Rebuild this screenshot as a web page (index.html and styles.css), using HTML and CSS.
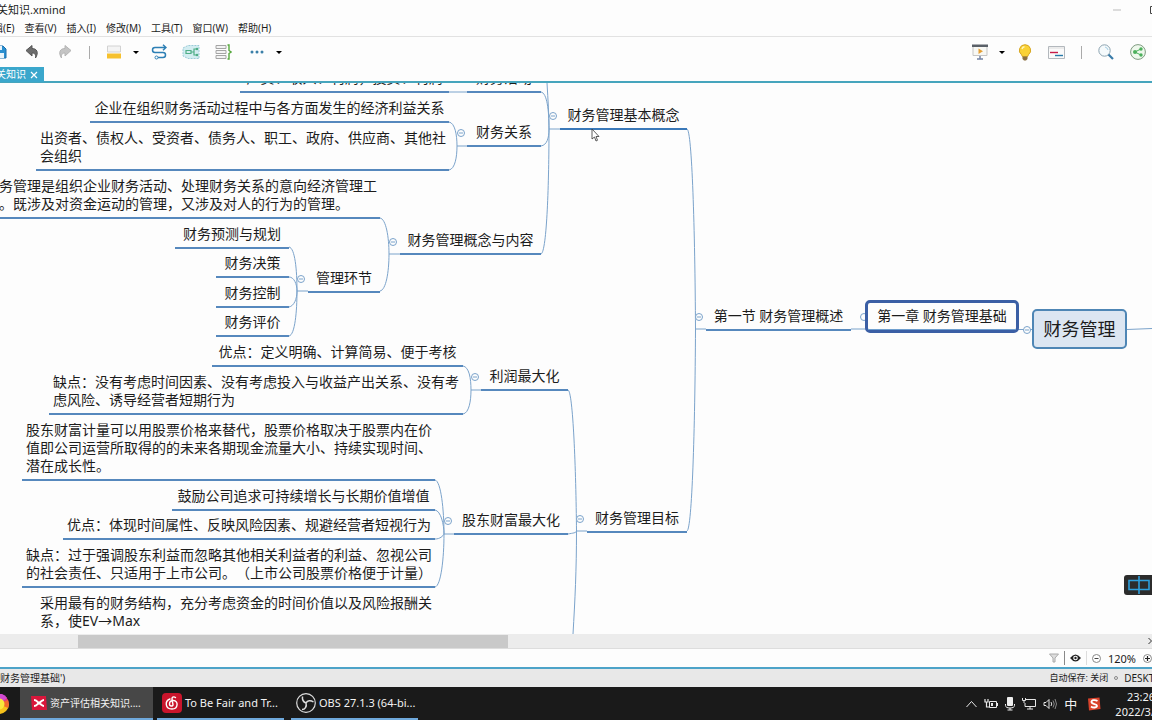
FILE: index.html
```html
<!DOCTYPE html>
<html lang="zh-CN">
<head>
<meta charset="utf-8">
<title>资产评估相关知识.xmind</title>
<link rel="stylesheet" href="styles.css">
</head>
<body>
<div class="app">
  <header class="titlebar">
    <span class="doc-title">相关知识.xmind</span>
    <span class="win-controls">
      <button class="win-btn" aria-label="最小化"><svg width="8" height="8" viewBox="0 0 8 8"><path d="M0 4h8" stroke="#bbb" fill="none"/></svg></button>
      <button class="win-btn" aria-label="最大化"><svg width="8" height="8" viewBox="0 0 8 8"><path d="M.5 .5h7v7h-7z" stroke="#444" fill="none"/></svg></button>
    </span>
  </header>
  <nav class="menubar">
    <button class="menu">编辑(E)</button>
    <button class="menu">查看(V)</button>
    <button class="menu">插入(I)</button>
    <button class="menu">修改(M)</button>
    <button class="menu">工具(T)</button>
    <button class="menu">窗口(W)</button>
    <button class="menu">帮助(H)</button>
  </nav>
  <div class="toolbar">
    <div class="tools">
      <button class="tool tool-save" aria-label="保存"><svg width="16" height="16" viewBox="0 0 16 16"><path d="M1 2h11l3 3v9H1z" fill="#2a8fd0" stroke="#1b6fae"/><path d="M4 2h7v4H4zM3 9h10v5H3z" fill="#e8f4fb"/></svg></button>
      <button class="tool tool-undo" aria-label="撤销"><svg width="16" height="16" viewBox="0 0 16 16"><path d="M2 6.500 8 1.500v3c5 0 7 4 3.500 9.500 .5-4-1-5-3.500-5v3z" fill="#6d6d6d" stroke="#555"/></svg></button>
      <button class="tool tool-redo" aria-label="重做"><svg width="16" height="16" viewBox="0 0 16 16"><path d="M14 6.500 8 1.500v3c-5 0-7 4-3.500 9.500-.5-4 1-5 3.500-5v3z" fill="#c4c4c4" stroke="#b4b4b4"/></svg></button>
      <span class="divider"></span>
      <button class="tool tool-topic" aria-label="主题"><svg width="16" height="16" viewBox="0 0 16 16"><path d="M1.500 2h13v6h-13z" fill="#f4f4f4" stroke="#d2d2d2"/><path d="M1 9.500h14v5H1z" fill="#f6c12e"/></svg></button>
      <button class="tool caret" aria-label="更多主题"><svg width="8" height="5" viewBox="0 0 8 5"><path d="M1 1h6L4 4z"/></svg></button>
      <button class="tool tool-rel" aria-label="联系"><svg width="16" height="16" viewBox="0 0 16 16"><path d="M15 3.500H4a2.500 2.500 0 0 0 0 5h8a2.500 2.500 0 0 1 0 5H7M12 .8l3 2.700-3 2.700" fill="none" stroke="#2d7fb5" stroke-width="1.500"/><circle cx="5.500" cy="13.500" r="1.500" fill="#fff" stroke="#2d7fb5"/></svg></button>
      <button class="tool tool-bound" aria-label="外框"><svg width="18" height="16" viewBox="0 0 18 16"><path d="M1 4 6 1.500h11v13H6L1 12z" fill="#d3edf1" stroke="#9bcbd8" stroke-dasharray="2 1"/><path d="M9 8h3M12 8V5h3M12 8v3h3M4 6.500h5v3H4z" fill="none" stroke="#4fae86" stroke-width="1.200"/><circle cx="15" cy="5" r="1.300" fill="#4fae86"/><circle cx="15" cy="11" r="1.300" fill="#4fae86"/></svg></button>
      <button class="tool tool-sum" aria-label="概要"><svg width="17" height="16" viewBox="0 0 17 16"><path d="M1 1.500h10v3H1zM1 6.500h10v3H1zM1 11.500h10v3H1z" fill="#f3f3f3" stroke="#a5a5a5"/><path d="M12.500 1H14v5.500l2 1.500-2 1.500V15h-1.500" fill="none" stroke="#55a83c" stroke-width="1.400"/></svg></button>
      <button class="tool tool-more" aria-label="更多"><svg width="14" height="4" viewBox="0 0 14 4"><g fill="#3a7fa8"><circle cx="2" cy="2" r="1.500"/><circle cx="7" cy="2" r="1.500"/><circle cx="12" cy="2" r="1.500"/></g></svg></button>
      <button class="tool caret" aria-label="更多选项"><svg width="8" height="5" viewBox="0 0 8 5"><path d="M1 1h6L4 4z"/></svg></button>
    </div>
    <div class="tools tools-right">
      <button class="tool" aria-label="演示"><svg width="16" height="16" viewBox="0 0 16 16"><path d="M1 2.500h14v9H1z" fill="#f8f8f4" stroke="#c5c5c5"/><path d="M0 .5h16v2.500H0z" fill="#5a6068"/><path d="M6.500 4.500v5.500L11 7.200z" fill="#e5a034"/><path d="M8 12v3M5 15h6" stroke="#7382a4" stroke-width="1.500"/></svg></button>
      <button class="tool caret" aria-label="演示选项"><svg width="8" height="5" viewBox="0 0 8 5"><path d="M1 1h6L4 4z"/></svg></button>
      <button class="tool tool-idea" aria-label="头脑风暴"><svg width="14" height="17" viewBox="0 0 14 17"><path d="M7 .7a5.600 5.600 0 0 0-3.500 10l1 2h5l1-2A5.600 5.600 0 0 0 7 .7z" fill="#fad235" stroke="#d6a520"/><path d="M4.500 12.500h5v2.500L8 16.500H6L4.500 15z" fill="#8c7140"/><path d="M4 5a3 3 0 0 1 2.500-2.200" stroke="#fff6bb" fill="none" stroke-width="1.400"/></svg></button>
      <button class="tool tool-gantt" aria-label="甘特图"><svg width="17" height="15" viewBox="0 0 17 15"><path d="M.5 1.500h16v12H.5z" fill="#fafafa" stroke="#b3b8bd"/><path d="M1 3h15" stroke="#dcdcdc"/><path d="M2 7.500h8" stroke="#c71b48" stroke-width="1.400"/><path d="M7 10.500h8" stroke="#2779a8" stroke-width="1.400"/></svg></button>
      <span class="divider"></span>
      <button class="tool tool-find" aria-label="搜索"><svg width="16" height="16" viewBox="0 0 16 16"><circle cx="6.500" cy="6.500" r="5.700" fill="#f5fafc" stroke="#8ba3b0"/><path d="M7 3a4 4 0 0 1 3 3" stroke="#a6cfe4" fill="none"/><path d="m10.500 10.500 4.500 4.500" stroke="#3a7ba8" stroke-width="2.200"/></svg></button>
      <button class="tool tool-share" aria-label="分享"><svg width="16" height="16" viewBox="0 0 16 16"><circle cx="8" cy="8" r="7.400" fill="#eef8ec" stroke="#7f9b80"/><path d="M10.800 5 5 8l5.800 3" fill="none" stroke="#4cb05c"/><g fill="#4cb05c"><circle cx="11" cy="5" r="1.700"/><circle cx="5" cy="8" r="2"/><circle cx="11" cy="11" r="1.700"/></g></svg></button>
    </div>
  </div>
  <div class="tabs">
    <button class="tab">资产评估相关知识</button><button class="tab-close" aria-label="关闭标签"><svg width="8" height="8" viewBox="0 0 8 8"><path d="m1 1 6 6M7 1 1 7" stroke="#fff" stroke-width="1.200"/></svg></button>
  </div>

  <main class="canvas">
    <svg class="links" width="1152" height="551" viewBox="0 83 1152 551">
      <g fill="none" stroke="#7ba3cb">
        <path d="M449 92H467M541 92C547 93 549 110 549 129M541 146C547 145 549 138 549 129M547 83C548 100 549 115 549 129M541 254C547 252 549 180 549 129M549 129H560"/>
        <path d="M449 122C455 123 457 135 457 146M449 170C455 169 457 157 457 146M457 146H467"/>
        <path d="M687 129C692 130 695 230 695.500 329M687 531C692 529 695 430 695.500 329M695.500 329H706"/>
        <path d="M380 218C386 219 389 237 389 254M380 291C386 290 389 272 389 254M389 254H400"/>
        <path d="M289 247C295 248 297 270 297 291M289 277C294 277 297 284 297 291M289 307C294 306 297 299 297 291M289 336C295 335 297 311 297 291M297 291H308"/>
        <path d="M463 366C469 367 471 378 471 390M463 414C469 413 471 401 471 390M471 390H481"/>
        <path d="M568 390C573 391 576 470 576.500 531M568 534C573 533 576 533 576.500 531M573 634C575 600 576.500 570 576.500 531H587"/>
        <path d="M435 480C441 481 444 510 444 534M435 510C441 511 444 525 444 534M435 539C440 539 443 536 444 534M435 587C441 586 444 558 444 534H454"/>
        <path d="M851 329H866M1018 329.500H1032M1127 329.500 1152 328.500"/>
      </g>
      <g fill="#fdfdfd" stroke="#7ba3cb">
        <circle cx="553" cy="116" r="3.500"/><circle cx="461" cy="133" r="3.500"/><circle cx="393" cy="242" r="3.500"/><circle cx="301" cy="279" r="3.500"/><circle cx="475" cy="377" r="3.500"/><circle cx="448" cy="521" r="3.500"/><circle cx="580" cy="519" r="3.500"/><circle cx="699" cy="317" r="3.500"/><circle cx="864" cy="317" r="3.500"/><circle cx="1027" cy="330" r="3.500"/>
        <path d="M551 116h4M459 133h4M391 242h4M299 279h4M473 377h4M446 521h4M578 519h4M697 317h4M1025 330h4"/>
      </g>
    </svg>
    <div class="node n-profit">产资、收入、利润，投资、利润</div>
    <div class="node n-activity">财务活动</div>
    <div class="node n-between">企业在组织财务活动过程中与各方面发生的经济利益关系</div>
    <div class="node n-parties">出资者、债权人、受资者、债务人、职工、政府、供应商、其他社<br>会组织</div>
    <div class="node n-relation">财务关系</div>
    <div class="node n-basic">财务管理基本概念</div>
    <div class="node n-define">财务管理是组织企业财务活动、处理财务关系的意向经济管理工<br>作。既涉及对资金运动的管理，又涉及对人的行为的管理。</div>
    <div class="node n-plan">财务预测与规划</div>
    <div class="node n-decide">财务决策</div>
    <div class="node n-control">财务控制</div>
    <div class="node n-review">财务评价</div>
    <div class="node n-steps">管理环节</div>
    <div class="node n-content">财务管理概念与内容</div>
    <div class="node n-pro1">优点：定义明确、计算简易、便于考核</div>
    <div class="node n-con1">缺点：没有考虑时间因素、没有考虑投入与收益产出关系、没有考<br>虑风险、诱导经营者短期行为</div>
    <div class="node n-maxprofit">利润最大化</div>
    <div class="node n-stock">股东财富计量可以用股票价格来替代，股票价格取决于股票内在价<br>值即公司运营所取得的的未来各期现金流量大小、持续实现时间、<br>潜在成长性。</div>
    <div class="node n-growth">鼓励公司追求可持续增长与长期价值增值</div>
    <div class="node n-pro2">优点：体现时间属性、反映风险因素、规避经营者短视行为</div>
    <div class="node n-con2">缺点：过于强调股东利益而忽略其他相关利益者的利益、忽视公司<br>的社会责任、只适用于上市公司。（上市公司股票价格便于计量）</div>
    <div class="node n-best">采用最有的财务结构，充分考虑资金的时间价值以及风险报酬关<br>系，使EV→Max</div>
    <div class="node n-maxwealth">股东财富最大化</div>
    <div class="node n-goal">财务管理目标</div>
    <div class="node n-section">第一节 财务管理概述</div>
    <div class="node n-chapter"><span class="chapter-line">第一章 财务管理基础</span></div>
    <div class="node n-root">财务管理</div>
    <svg class="cursor" width="9" height="14" viewBox="0 0 9 14"><path d="M1 1v10l2.500-2 1.500 4 1.500-.7L5 8.500h3z" fill="#fff" stroke="#333" stroke-width=".8"/></svg>
    <div class="ime"><svg width="24" height="20" viewBox="0 0 24 20"><path d="M2 5.500h20v9H2zM12 1v18" fill="none" stroke="#2d9fdc" stroke-width="1.600"/></svg></div>
  </main>

  <div class="scroll"><div class="scroll-thumb"></div><svg class="scroll-end" width="4" height="8" viewBox="0 0 4 8"><path d="m.5 1 3 3-3 3" fill="none" stroke="#333"/></svg></div>
  <div class="viewbar">
    <button class="tool" aria-label="筛选"><svg width="10" height="10" viewBox="0 0 10 10"><path d="M.5 1h9L6 5v4H4V5z" fill="#ddd" stroke="#aaa"/></svg></button>
    <span class="view-divider"></span>
    <button class="tool" aria-label="查看模式"><svg width="11" height="8" viewBox="0 0 11 8"><path d="M0 4Q5.500-3 11 4 5.500 11 0 4z" fill="#222"/><circle cx="5.500" cy="4" r="2.300" fill="#fff"/><circle cx="5.500" cy="4" r="1.200" fill="#222"/></svg></button>
    <span class="view-divider view-divider-light"></span>
    <button class="tool" aria-label="缩小"><svg width="9" height="9" viewBox="0 0 9 9"><circle cx="4.500" cy="4.500" r="4" fill="#fff" stroke="#888"/><path d="M2.500 4.500h4" stroke="#444"/></svg></button>
    <span class="zoom-value">120%</span>
    <button class="tool" aria-label="放大"><svg width="9" height="9" viewBox="0 0 9 9"><circle cx="4.500" cy="4.500" r="4" fill="#fff" stroke="#888"/><path d="M2 4.500h5M4.500 2v5" stroke="#222" stroke-width="1.200"/></svg></button>
  </div>
  <footer class="status">
    <span class="status-topic">财务管理基础')</span>
    <span class="status-info"><span>自动保存: 关闭</span><span class="status-dot"></span><span class="host">DESKTOP</span></span>
  </footer>
  <div class="taskbar">
    <div class="tasks">
      <button class="task-round" aria-label="浏览器"><svg width="20" height="20" viewBox="0 0 20 20"><path d="M10 0a10 10 0 0 1 10 10H10z" fill="#e6397c"/><path d="M20 10a10 10 0 0 1-10 10V10z" fill="#f6c21b"/><path d="M10 0h3a10 10 0 0 1 5 4L10 10z" fill="#d24ad0"/><path d="M19 6a10 10 0 0 1 0 8l-9-4z" fill="#f26a2c"/><circle cx="10" cy="10" r="5.500" fill="#f9e83c"/></svg></button>
      <button class="task task-active"><svg width="16" height="16" viewBox="0 0 16 16"><path d="M0 1h15l1 14H1z" fill="#d9173c"/><path d="M3 5c3 0 3 2 5 3s3 3 5 3M3 11c3 0 3-2 5-3s3-3 5-3" fill="none" stroke="#fff" stroke-width="2"/></svg><span class="task-name">资产评估相关知识....</span></button>
      <button class="task"><svg width="20" height="20" viewBox="0 0 20 20"><rect width="20" height="20" rx="4" fill="#c9152c"/><path d="M13.500 4.500c-2-1.500-4 0-3.500 2l1 5c.3 2-3.500 2.200-3.500-.5 0-2.500 2-3.500 4-3.500 5 0 5 8.500-1.500 8.500C3 16 2.500 8 8 6" fill="none" stroke="#fff" stroke-width="1.400" stroke-linecap="round"/></svg><span class="task-name">To Be Fair and Tr...</span></button>
      <button class="task"><svg width="20" height="20" viewBox="0 0 20 20"><circle cx="10" cy="10" r="9.300" fill="#1a1a1a" stroke="#ddd" stroke-width="1.200"/><path d="M6.500 3.500c-.5 3.500 1 5.500 3.500 6.500M17.500 9c-3-2-6-1.500-7.500 1M6 16.500c3 0 5-3 4-6.500" fill="none" stroke="#ddd" stroke-width="1.500"/></svg><span class="task-name">OBS 27.1.3 (64-bi...</span></button>
    </div>
    <div class="tray">
      <svg width="11" height="8" viewBox="0 0 11 8"><path d="m.5 7 5-5.500 5 5.500" fill="none" stroke="#e8e8e8"/></svg>
      <svg width="14" height="12" viewBox="0 0 14 12"><path d="M5.500 3.500h7v6h-7z" fill="none" stroke="#e8e8e8"/><path d="M7 5h2v3H7zM13 5h1v3h-1z" fill="#e8e8e8"/><path d="M1 1v3h3V1M2.500 4v5h3" fill="none" stroke="#e8e8e8" stroke-width="1.200"/></svg>
      <svg width="10" height="14" viewBox="0 0 10 14"><rect x="2" width="6" height="9" rx="1" fill="#eee"/><path d="M.5 7v1.500C.5 10 2 11 5 11s4.500-1 4.500-2.500V7M5 11v2M2.500 13h5" fill="none" stroke="#eee"/></svg>
      <svg width="14" height="13" viewBox="0 0 14 13"><path d="M4 2.500h9.500v7H3V6M8 9.500v2.500M5 12h6M.5 1v2.500h3V1M2 3.500V6" fill="none" stroke="#e8e8e8"/></svg>
      <svg width="14" height="12" viewBox="0 0 14 12"><path d="M1 4.500h2L6 1.500v9L3 7.500H1z" fill="none" stroke="#e8e8e8"/><path d="M8 4q1.500 2 0 4" fill="none" stroke="#ddd"/><path d="M10 2.500q2.500 3.500 0 7M12 1q3 5 0 10" fill="none" stroke="#888"/></svg>
      <span class="tray-lang">中</span>
      <svg class="sogou" width="14" height="14" viewBox="0 0 14 14"><path d="M1 1.500 12.500.5 13.500 12 2 13.500z" fill="#d9432b"/><path d="M10.500 4C8 2.500 4 3 4.500 5.200S10 6.700 10 8.800 6 11 4 9.500" fill="none" stroke="#fff" stroke-width="1.800"/></svg>
      <div class="clock"><span>23:26</span><span>2022/3/</span></div>
    </div>
  </div>
</div>
</body>
</html>
```
FILE: styles.css
```css
* { box-sizing: border-box; }
body {
  margin: 0;
  background: #fdfdfd;
  color: #1c1c1c;
  font-family: "Noto Sans", "Noto Sans CJK SC", sans-serif;
  font-size: 10px;
  text-spacing-trim: space-all;
}
button {
  border: 0;
  padding: 0;
  background: none;
  color: inherit;
  font: inherit;
  white-space: nowrap;
}
svg { display: block; flex: none; }
.app {
  display: flex;
  flex-direction: column;
  height: 100vh;
  overflow: hidden;
}
.app > * { flex: none; }

.titlebar {
  display: flex;
  justify-content: space-between;
  height: 20px;
  line-height: 20px;
  font-size: 11px;
}
.doc-title { margin-left: -14px; }
.win-controls { display: flex; gap: 29px; margin-right: -6px; }
.win-btn { display: flex; align-items: center; }

.menubar {
  display: flex;
  gap: 10px;
  height: 16px;
  margin-left: -17px;
  line-height: 16px;
}
.toolbar {
  display: flex;
  justify-content: space-between;
  height: 31px;
  padding: 0 6px 0 0;
  border-top: 1px solid #e2e2e2;
}
.tools { display: flex; align-items: center; }
.tool { display: flex; align-items: center; justify-content: center; }
.tool-save { margin-left: -9px; }
.tool-undo { margin-left: 17px; }
.tool-redo { margin-left: 17px; }
.divider { width: 1px; height: 13px; background: #aaa; }
.tools > .divider { margin: 0 16px; }
.caret { margin-left: 10px; }
.tool-rel { margin-left: 11px; }
.tool-bound, .tool-sum { margin-left: 15px; }
.tool-more { margin-left: 18px; }
.tool-more + .caret { margin-left: 11px; }
.tool-idea { margin-left: 12px; }
.tool-gantt { margin-left: 16px; }
.tool-share { margin-left: 16px; }

.tabs {
  display: flex;
  height: 16px;
  border-bottom: 2px solid #46a5bd;
}
.tab, .tab-close { height: 15px; background: #3ba7cc; color: #fff; }
.tab { margin-left: -54px; line-height: 15px; }
.tab-close { padding: 0 6px 0 4px; }

.canvas {
  position: relative;
  flex: 1 1 0;
  overflow: hidden;
}
.links { position: absolute; left: 0; top: 0; }
.node {
  position: absolute;
  padding-bottom: 4px;
  border-bottom: 2px solid #5688bd;
  font-size: 14px;
  line-height: 18px;
  text-align: center;
  white-space: nowrap;
}
.n-profit { left: 240px; top: -14px; width: 209px; }
.n-activity { left: 467px; top: -14px; width: 74px; }
.n-between { left: 90px; top: 16px; width: 359px; }
.n-parties { left: 36px; top: 46px; width: 413px; }
.n-relation { left: 467px; top: 40px; width: 74px; }
.n-basic { left: 560px; top: 23px; width: 127px; border-color: #3a78b8; }
.n-define { left: -15px; top: 94px; width: 395px; }
.n-plan { left: 175px; top: 142px; width: 114px; }
.n-decide { left: 216px; top: 171px; width: 73px; }
.n-control { left: 216px; top: 201px; width: 73px; }
.n-review { left: 216px; top: 230px; width: 73px; }
.n-steps { left: 308px; top: 186px; width: 72px; }
.n-content { left: 400px; top: 148px; width: 141px; }
.n-pro1 { left: 212px; top: 260px; width: 251px; }
.n-con1 { left: 49px; top: 290px; width: 414px; }
.n-maxprofit { left: 481px; top: 284px; width: 87px; }
.n-stock { left: 22px; top: 338px; width: 413px; }
.n-growth { left: 172px; top: 404px; width: 263px; }
.n-pro2 { left: 63px; top: 433px; width: 372px; }
.n-con2 { left: 22px; top: 463px; width: 413px; }
.n-best { left: 36px; top: 511px; width: 399px; }
.n-maxwealth { left: 454px; top: 428px; width: 114px; }
.n-goal { left: 587px; top: 426px; width: 100px; }
.n-section { left: 706px; top: 224px; width: 145px; }
.n-parties, .n-con1, .n-stock, .n-con2, .n-best { padding-left: 4px; text-align: left; }
.n-define { text-align: left; }
.n-chapter {
  left: 865px;
  top: 217px;
  width: 154px;
  padding: 0;
  border: 3px solid #3b5fa5;
  border-radius: 5px;
  background: #fdfdfd;
}
.chapter-line { display: block; padding: 4px 0; border-bottom: 1px solid #6f9fcf; }
.n-root {
  left: 1032px;
  top: 226px;
  width: 95px;
  padding: 0;
  border: 2px solid #4e86b5;
  border-radius: 5px;
  background: #dce6f2;
  font-size: 18px;
  line-height: 36px;
}
.cursor { position: absolute; left: 591px; top: 45px; }
.ime {
  position: absolute;
  right: -3px;
  top: 492px;
  padding: 0 4px 0 3px;
  border-radius: 3px;
  background: #2c2c2c;
}

.scroll {
  display: flex;
  align-items: center;
  justify-content: space-between;
  height: 15px;
  padding-left: 78px;
  border-bottom: 1px solid #ddd;
  background: #ececec;
}
.scroll-thumb { width: 40%; height: 13px; background: #c9c9c9; }
.viewbar {
  display: flex;
  align-items: center;
  justify-content: flex-end;
  gap: 5px;
  height: 20px;
  border-bottom: 2px solid #4da3c8;
}
.view-divider { width: 1px; height: 14px; background: #888; }
.view-divider-light { background: #ddd; }
.zoom-value { margin: 0 2px; font-size: 11px; }
.status {
  display: flex;
  justify-content: space-between;
  height: 18px;
  background: #e8e8e8;
  line-height: 18px;
}
.status-info { display: flex; align-items: center; gap: 6px; margin-right: -16px; font-size: 9px; }
.status-dot { width: 4px; height: 4px; border: 1px solid #888; border-radius: 50%; }
.host { font-size: 10px; }

.taskbar {
  display: flex;
  justify-content: space-between;
  height: 33px;
  background: #1a1a1a;
  color: #f2f2f2;
}
.tasks { display: flex; }
.task-round { width: 20px; margin-left: -11px; margin-right: 11px; }
.task {
  display: flex;
  align-items: center;
  gap: 3px;
  width: 127px;
  margin-right: 7px;
  padding-left: 5px;
  border-bottom: 2px solid #6fa9dc;
  font-size: 11px;
}
.task-active {
  width: 133px;
  margin-right: 4px;
  padding-left: 11px;
  background: #474747;
  font-size: 10px;
}
.tray { display: flex; align-items: center; gap: 7px; margin-right: -3px; }
.tray-lang { font-size: 13px; }
.sogou { margin-left: 3px; }
.clock {
  display: flex;
  flex-direction: column;
  align-items: flex-end;
  margin-left: 7px;
  font-size: 11px;
  line-height: 15px;
}
```
